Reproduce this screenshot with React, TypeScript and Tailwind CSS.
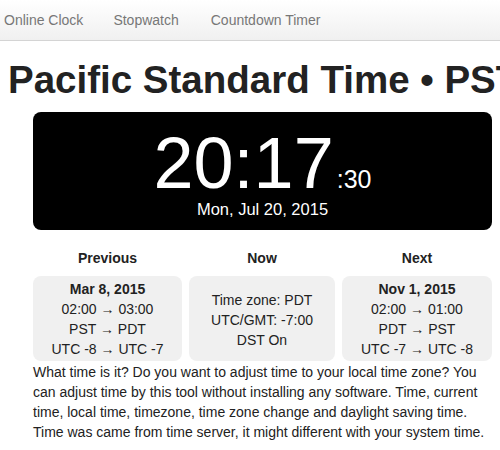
import React from "react";

export default function App() {
  return (
    <div
      className="w-[500px] h-[450px] overflow-hidden bg-white text-[#333] text-[14px] leading-[20px]"
      style={{ fontFamily: '"Liberation Sans", Arial, Helvetica, sans-serif' }}
    >
      <nav className="h-[41px] border-b border-[#d4d4d4] bg-gradient-to-b from-white to-[#f0f0f0]">
        <ul className="flex pl-[4px] pt-[10px] gap-[30px] text-[#777] text-[14px] leading-[20px]">
          <li>Online Clock</li>
          <li>Stopwatch</li>
          <li className="ml-[2px]">Countdown Timer</li>
        </ul>
      </nav>

      <h1 className="mt-[18px] ml-[8px] whitespace-nowrap text-[38.5px] leading-[41.8px] font-bold text-[#222]">
        Pacific Standard Time • PST
      </h1>

      <div className="ml-[33px] w-[459px]">
        <div className="mt-[11px] h-[118px] rounded-[8px] bg-black text-white text-center pt-[15px]">
          <div className="flex justify-center items-baseline h-[72px]">
            <span className="text-[72px] leading-[72px]">20:17</span>
            <span className="text-[25px] leading-[25px] ml-[3px]">:30</span>
          </div>
          <div className="text-[16.5px] leading-[20px]">Mon, Jul 20, 2015</div>
        </div>

        <div className="grid grid-cols-[149px_146px_150px] gap-x-[7px] mt-[18px]">
          <div className="text-center font-bold text-[#222]">Previous</div>
          <div className="text-center font-bold text-[#222]">Now</div>
          <div className="text-center font-bold text-[#222]">Next</div>

          <div className="mt-[8px] h-[85px] rounded-[8px] bg-[#f0f0f0] text-center text-[#222] pt-[3px]">
            <div className="font-bold">Mar 8, 2015</div>
            <div>02:00 → 03:00</div>
            <div>PST → PDT</div>
            <div>UTC -8 → UTC -7</div>
          </div>
          <div className="mt-[8px] h-[85px] rounded-[8px] bg-[#f0f0f0] text-center text-[#222] flex flex-col justify-center pt-[3px]">
            <div>Time zone: PDT</div>
            <div>UTC/GMT: -7:00</div>
            <div>DST On</div>
          </div>
          <div className="mt-[8px] h-[85px] rounded-[8px] bg-[#f0f0f0] text-center text-[#222] pt-[3px]">
            <div className="font-bold">Nov 1, 2015</div>
            <div>02:00 → 01:00</div>
            <div>PDT → PST</div>
            <div>UTC -7 → UTC -8</div>
          </div>
        </div>

        <p className="mt-[1px] text-[#222]">
          What time is it? Do you want to adjust time to your local time zone? You can adjust time by this tool without installing any software. Time, current time, local time, timezone, time zone change and daylight saving time. Time was came from time server, it might different with your system time.
        </p>
      </div>
    </div>
  );
}
